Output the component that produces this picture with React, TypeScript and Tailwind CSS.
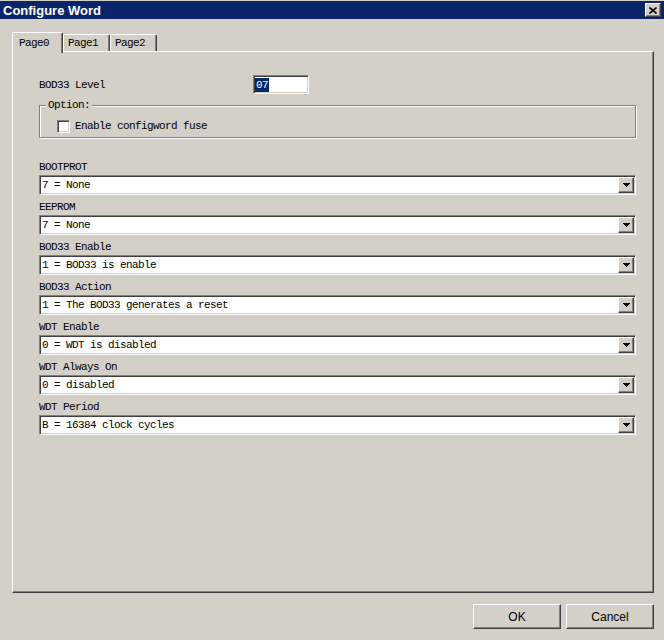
import React from "react";

const mono = "font-['Liberation_Mono',monospace] text-[11px] tracking-[-0.6px] text-black leading-[14px]";
const sunken =
  "border border-t-[#808080] border-l-[#808080] border-r-white border-b-white shadow-[inset_1px_1px_0_#404040,inset_-1px_-1px_0_#d4d0c8]";
const raised =
  "border border-t-white border-l-white border-r-[#404040] border-b-[#404040] shadow-[inset_-1px_-1px_0_#808080]";

function Arrow() {
  return (
    <svg width="7" height="4" viewBox="0 0 7 4" className="block">
      <path d="M0 0h7v1H0zM1 1h5v1H1zM2 2h3v1H2zM3 3h1v1H3z" fill="#000" />
    </svg>
  );
}

function Combo({ label, value }: { label: string; value: string }) {
  return (
    <div className="flex flex-col">
      <div className={`${mono} h-[14px]`}>{label}</div>
      <div className={`mt-[1px] h-[20px] bg-white ${sunken} flex items-center`}>
        <div className={`${mono} flex-1 pl-[2px]`}>{value}</div>
        <div className={`w-[16px] h-[16px] mr-[1px] bg-[#d4d0c8] ${raised} flex items-center justify-center`}>
          <Arrow />
        </div>
      </div>
    </div>
  );
}

export default function App() {
  const combos: [string, string][] = [
    ["BOOTPROT", "7 = None"],
    ["EEPROM", "7 = None"],
    ["BOD33 Enable", "1 = BOD33 is enable"],
    ["BOD33 Action", "1 = The BOD33 generates a reset"],
    ["WDT Enable", "0 = WDT is disabled"],
    ["WDT Always On", "0 = disabled"],
    ["WDT Period", "B = 16384 clock cycles"],
  ];
  const tabBase =
    "border-l border-t border-l-white border-t-white border-r border-r-[#404040] rounded-tl-[2px] rounded-tr-[2px] shadow-[inset_-1px_0_0_#808080] flex items-start";
  return (
    <div className="w-[664px] h-[640px] bg-[#d4d0c8] flex flex-col overflow-hidden">
      <div className="h-[1px] bg-[#d4d0c8]" />
      <div className="h-[18px] bg-[#0a246a] flex items-center justify-between pl-[3px] pr-[3px]">
        <span className="font-['Liberation_Sans',Arial,sans-serif] font-bold text-[13px] text-white leading-none">
          Configure Word
        </span>
        <div className={`w-[16px] h-[14px] bg-[#d4d0c8] ${raised} flex items-center justify-center`}>
          <svg width="8" height="7" viewBox="0 0 8 7">
            <path d="M0.5 0.5L7.5 6.5M7.5 0.5L0.5 6.5" stroke="#000" strokeWidth="1.6" />
          </svg>
        </div>
      </div>

      <div className="mt-[13px] ml-[12px] flex flex-col">
        <div className="flex items-start h-[19px] relative z-10">
          <div className={`h-[21px] w-[51px] bg-[#d4d0c8] ${tabBase} pl-[6px] pt-[3px]`}>
            <span className={mono}>Page0</span>
          </div>
          <div className={`mt-[2px] h-[17px] w-[47px] ${tabBase} pl-[4px] pt-[1px]`}>
            <span className={mono}>Page1</span>
          </div>
          <div className={`mt-[2px] h-[17px] w-[47px] ${tabBase} pl-[4px] pt-[1px]`}>
            <span className={mono}>Page2</span>
          </div>
        </div>
        <div className="w-[642px] h-[542px] border border-l-white border-t-white border-r-[#404040] border-b-[#404040] shadow-[inset_-1px_-1px_0_#808080] pl-[26px] pr-[17px] pt-[23px]">
          <div className="flex items-center h-[19px]">
            <div className={`${mono} w-[214px]`}>BOD33 Level</div>
            <div className={`w-[56px] h-[19px] bg-white ${sunken} flex items-center pl-[1px]`}>
              <span className={`${mono} bg-[#0a246a] text-white px-[1px]`}>07</span>
            </div>
          </div>

          <div className="mt-[11px] h-[33px] border border-[#808080] shadow-[inset_1px_1px_0_#fff,1px_1px_0_#fff] relative">
            <div className={`${mono} absolute -top-[8px] left-[6px] bg-[#d4d0c8] px-[2px]`}>Option:</div>
            <div className="flex items-center pl-[17px] pt-[13px]">
              <div className={`w-[13px] h-[13px] bg-white ${sunken}`} />
              <span className={`${mono} ml-[5px]`}>Enable configword fuse</span>
            </div>
          </div>

          <div className="mt-[22px] flex flex-col gap-[5px]">
            {combos.map(([l, v]) => (
              <Combo key={l} label={l} value={v} />
            ))}
          </div>
        </div>
      </div>

      <div className="mt-[11px] flex justify-end gap-[5px] pr-[10px]">
        <div className={`w-[88px] h-[25px] ${raised} flex items-center justify-center font-['Liberation_Sans',Arial,sans-serif] text-[12px] text-black`}>
          OK
        </div>
        <div className={`w-[88px] h-[25px] ${raised} flex items-center justify-center font-['Liberation_Sans',Arial,sans-serif] text-[12px] text-black`}>
          Cancel
        </div>
      </div>
    </div>
  );
}
